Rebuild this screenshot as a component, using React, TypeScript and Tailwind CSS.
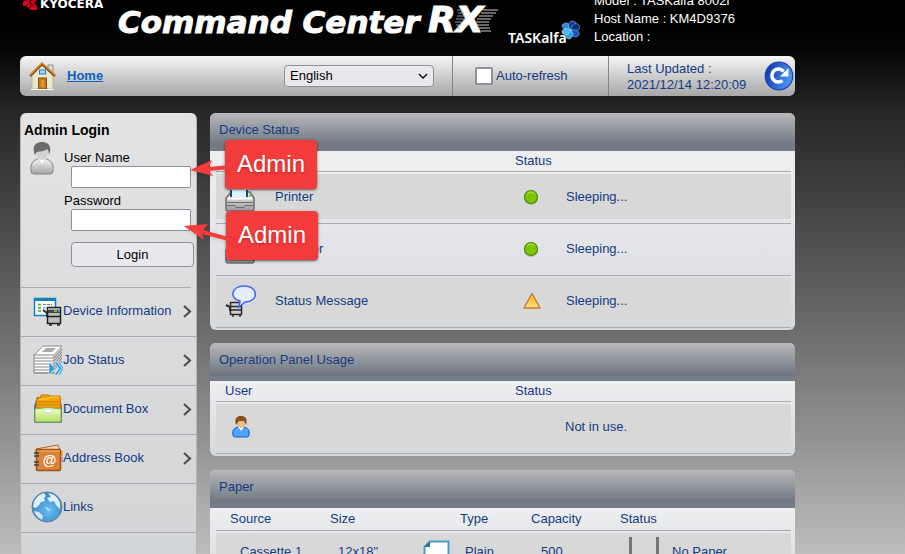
import { useState } from "react";
import type { ReactNode } from "react";

const menuItems = [
  { label: "Device Information", icon: <DeviceIcon />, arrow: true },
  { label: "Job Status", icon: <JobIcon />, arrow: true },
  { label: "Document Box", icon: <BoxIcon />, arrow: true },
  { label: "Address Book", icon: <AddressIcon />, arrow: true },
  { label: "Links", icon: <GlobeIcon />, arrow: false },
];

const deviceRows = [
  { name: "Printer", icon: <PrinterIcon />, status: "Sleeping...", light: <GreenLight /> },
  { name: "Scanner", icon: <PrinterIcon />, status: "Sleeping...", light: <GreenLight /> },
  { name: "Status Message", icon: <MessageIcon />, status: "Sleeping...", light: <Warning /> },
];

function KyoceraMark() {
  return (
    <svg width="14" height="14" viewBox="0 0 14 14" className="shrink-0">
      <path d="M0 0h14v4l-3 3 3 3v4H8l-5-4H0z" fill="#e0001b" />
      <path d="M0 5l4-1 3-4M3 10l4-4 4 5M7 0v5l7-3M9 7l-2 5" stroke="#160305" strokeWidth="1" fill="none" />
    </svg>
  );
}

function Pinwheel() {
  return (
    <svg width="20" height="20" viewBox="0 0 20 20" className="shrink-0">
      <path d="M10 10C5 11 1 8 1 5c4-4 8-2 9 5z" fill="#2b8be0" stroke="#bfe0fa" strokeWidth=".5" />
      <path d="M10 10C6 6 7 2 11 1c5 0 6 4-1 9z" fill="#123f9b" stroke="#bfe0fa" strokeWidth=".5" />
      <path d="M10 10c1-6 5-8 8-5 2 4-1 7-8 5z" fill="#0b2b7c" stroke="#8fc8f5" strokeWidth=".5" />
      <path d="M10 10c6-1 9 1 8 5-3 4-8 2-8-5z" fill="#1b55b8" stroke="#8fc8f5" strokeWidth=".5" />
      <path d="M10 10c3 4 2 8-2 9-5-1-5-6 2-9z" fill="#2f9cec" stroke="#bfe0fa" strokeWidth=".5" />
      <path d="M10 10c-2 5-6 6-9 3-1-4 4-6 9-3z" fill="#55b6f5" stroke="#bfe0fa" strokeWidth=".5" />
    </svg>
  );
}

function HouseIcon() {
  return (
    <svg width="28" height="29" viewBox="0 0 28 29" className="shrink-0">
      <path d="M19 3h5v9l-5-4z" fill="#d9ddd2" stroke="#8b938f" />
      <path d="M3 13L13 3l11 10v14H3z" fill="#e6e8cf" stroke="#b3b8a4" />
      <path d="M1 14L13 2l13 12" fill="none" stroke="#8d4c12" strokeWidth="2.500" />
      <path d="M1 13L13 1l13 12" fill="none" stroke="#d98b2c" strokeWidth="1.200" />
      <rect x="10.500" y="8" width="6" height="4" fill="#a9d8ff" stroke="#1f7bd0" />
      <rect x="9.500" y="16" width="8" height="11" fill="#c47a1a" stroke="#8a4a10" />
      <path d="M12 18h3v7h-3z" fill="#e09a2c" />
      <path d="M2 27.500h23" stroke="#f7f7f0" />
    </svg>
  );
}

function RefreshIcon() {
  return (
    <svg width="30" height="30" viewBox="0 0 30 30">
      <defs>
        <linearGradient id="refresh" x1="0" y1="0" x2="1" y2="0.300">
          <stop offset="0" stopColor="#0a2fa8" />
          <stop offset="1" stopColor="#4b93f0" />
        </linearGradient>
      </defs>
      <circle cx="15" cy="15" r="13.800" fill="url(#refresh)" stroke="#1a47ae" strokeWidth="1.200" />
      <path d="M18.500 19.500a6.500 6.500 0 1 1 1-9" fill="none" stroke="#fff" strokeWidth="3.500" />
      <path d="M24.500 7v8.500h-8.500z" fill="#fff" />
    </svg>
  );
}

function AdminIcon() {
  return (
    <svg width="26" height="34" viewBox="0 0 26 34">
      <defs>
        <linearGradient id="shirt" x1="0" y1="0" x2="0" y2="1">
          <stop offset="0" stopColor="#f2f2f2" />
          <stop offset="1" stopColor="#a4a4a4" />
        </linearGradient>
      </defs>
      <path d="M2 30c-1-8 3-11 7-12h8c5 1 8 5 7 12q0 3-3 3H5q-3 0-3-3z" fill="url(#shirt)" stroke="#858585" />
      <path d="M9 18l4 6 4-6-1-3h-6z" fill="#fff" stroke="#b9b9b9" strokeWidth=".5" />
      <ellipse cx="13" cy="12" rx="6" ry="7" fill="#d2d2d2" />
      <path d="M6 14C2 4 8 1 13 1s11 3 7 13c0-4-1-5-2-6-3 3-8 2-10 3-1 0-1 2-2 3z" fill="#6a6a6a" />
    </svg>
  );
}

function DeviceIcon() {
  return (
    <svg width="30" height="30" viewBox="0 0 30 30">
      <path d="M1.500 2.500h21v17h-21z" fill="#f7fbff" stroke="#1683b8" strokeWidth="1.500" />
      <path d="M1.500 4h21" stroke="#1683b8" strokeWidth="2" />
      <path d="M5 8.500h3M5 12h3M5 15h3" stroke="#4aa52b" strokeWidth="1.500" />
      <path d="M10 8.500h9M10 12h9M10 15h3" stroke="#777" strokeDasharray="3 1" />
      <path d="M10 14l4 3v4" fill="none" stroke="#333" strokeWidth="2" />
      <path d="M14.500 11.500h13v16h-13z" fill="#bdbdbd" stroke="#222" strokeWidth="1.500" />
      <path d="M15 12h12v2H15z" fill="#a5a5a5" />
      <path d="M15 14h12v3H15z" fill="#444" />
      <path d="M21 15h3" stroke="#53d01c" strokeWidth="2" />
      <path d="M25 15h2" stroke="#1591ff" strokeWidth="2" />
      <path d="M15 20.500h12M16 29h3M24 29h3" stroke="#222" strokeWidth="1.500" />
    </svg>
  );
}

function JobIcon() {
  return (
    <svg width="30" height="30" viewBox="0 0 30 30">
      <path d="M1 10L10 1h19l-8 9v18H1z" fill="#fafafa" stroke="#888" />
      <path d="M21 10l8-9v16l-8 10z" fill="#c9c9c9" />
      <path d="M1 10h20M1 13h20M1 16h20M1 19h20M1 22h20M1 25h20M1 28h20" stroke="#8c8c8c" />
      <path d="M21 13l8-9M21 16l8-9M21 19l8-9M21 22l8-9M21 25l8-9" stroke="#777" strokeWidth=".8" />
      <path d="M9 7l4-4h10l-4 4z" fill="#aaa" />
      <path d="M16 17v13l6-6.500zM21 17h3l5 6.500-5 6.500h-3l5-6.500zM25 17h2l4 6.500-4 6.500h-2l4-6.500z" fill="#279ae8" stroke="#fff" strokeWidth=".5" />
    </svg>
  );
}

function BoxIcon() {
  return (
    <svg width="30" height="30" viewBox="0 0 30 30">
      <defs>
        <linearGradient id="box" x1="0" y1="0" x2="0" y2="1">
          <stop offset="0" stopColor="#f1fbd5" />
          <stop offset="1" stopColor="#b2e35f" />
        </linearGradient>
      </defs>
      <path d="M4 3L1 12v16l2 1h24l2-1V12L26 3z" fill="#5d7480" />
      <path d="M3 14L4 4h4V1h7l2 1h10l1 12z" fill="#f5a400" stroke="#c67100" />
      <path d="M4 8h23M4 11h24" stroke="#c97a04" />
      <path d="M6 5h9l2-2h9" stroke="#ffd054" fill="none" />
      <path d="M2 15q13-3 26 0v11q0 2-2 2H4q-2 0-2-2z" fill="url(#box)" stroke="#8bad57" />
      <ellipse cx="15" cy="17" rx="4" ry="2" fill="#fff" stroke="#b9cba0" strokeWidth=".6" />
    </svg>
  );
}

function AddressIcon() {
  return (
    <svg width="30" height="30" viewBox="0 0 30 30">
      <path d="M3 6l22-4 2 5v4H3z" fill="#f6ddc4" stroke="#b55f18" />
      <path d="M27 8h3v5h-3z" fill="#f4b41a" />
      <path d="M27 14h3v5h-3z" fill="#c38fe0" />
      <rect x="3.500" y="6.500" width="24" height="21" rx="1" fill="#dd8238" stroke="#a3530f" strokeWidth="1.500" />
      <path d="M4 8h23" stroke="#f3b076" />
      <path d="M1 10h5M1 13h5M1 19h5M1 22h5" stroke="#3c3c3c" strokeWidth="1.500" />
      <text x="16.500" y="22" textAnchor="middle" fill="#fff" fontFamily="Liberation Sans, sans-serif" fontSize="14" fontWeight="700">@</text>
    </svg>
  );
}

function GlobeIcon() {
  return (
    <svg width="32" height="32" viewBox="0 0 32 32">
      <defs>
        <radialGradient id="globe" cx=".55" cy=".6" r=".55">
          <stop offset="0" stopColor="#6ec0f5" />
          <stop offset="1" stopColor="#3c86c3" />
        </radialGradient>
      </defs>
      <circle cx="16" cy="16" r="15" fill="url(#globe)" stroke="#5d7f9c" />
      <path d="M3 11C5 6 9 3 13 2l2 3-2 2 1 3-4 1-2 3-3 3-3-1zM17 2q9 1 12 10v6l-4-4-2-4-4 1-3-4 4-1z" fill="#eef8ff" opacity=".9" />
      <path d="M3 20l5 1 4 4-1 4q-6-3-8-9z" fill="#dff0fb" opacity=".9" />
      <path d="M15 16l2 3 2-1" stroke="#e8f6ff" fill="none" />
    </svg>
  );
}

function PrinterIcon() {
  return (
    <svg width="30" height="30" viewBox="0 0 30 30">
      <defs>
        <linearGradient id="printer" x1="0" y1="0" x2="0" y2="1">
          <stop offset="0" stopColor="#efefef" />
          <stop offset="1" stopColor="#9b9b9b" />
        </linearGradient>
      </defs>
      <path d="M6 10h19l4 6v11q0 2-2 2H3q-2 0-2-2V16z" fill="url(#printer)" stroke="#707070" strokeWidth="1.500" />
      <path d="M7 2h15v13H5z" fill="#e2f4fb" />
      <path d="M6 8v7M22 8v7" stroke="#174d72" strokeWidth="2" />
      <path d="M3 16.500h24" stroke="#fff" strokeWidth="2" />
      <path d="M2 20.500h26" stroke="#6f6f6f" />
      <path d="M2 23.500h8l1 2h8l1-2h8" stroke="#6f6f6f" fill="none" />
      <path d="M24 13.500h2" stroke="#62c918" strokeWidth="2" />
    </svg>
  );
}

function MessageIcon() {
  return (
    <svg width="32" height="32" viewBox="0 0 32 32">
      <path d="M1 20l4 2v4" fill="none" stroke="#2b2b2b" strokeWidth="2" />
      <path d="M5.500 17.500h11v12h-11z" fill="#d0d0d0" stroke="#2b2b2b" strokeWidth="1.500" />
      <path d="M5 21.500h12M5 25h12M7 31h2M14 31h2" stroke="#2b2b2b" strokeWidth="1.500" />
      <path d="M19 1c15 0 15 16 1 16l-6 5 1-6C4 14 6 1 19 1z" fill="#e3effb" stroke="#3f62ff" strokeWidth="1.500" />
    </svg>
  );
}

function UserIcon() {
  return (
    <svg width="18" height="23" viewBox="0 0 18 23">
      <path d="M1 20c-1-6 2-7 5-8h6c4 1 6 3 5 8q0 2-2 2H3q-2 0-2-2z" fill="#4ea3ff" stroke="#1255d6" />
      <path d="M6 12l3 4 3-4z" fill="#fff" />
      <ellipse cx="9" cy="8" rx="4" ry="5" fill="#e9c184" />
      <path d="M4 10C2 3 5 1 9 1s7 2 5 9l-2-4H7z" fill="#84501c" />
    </svg>
  );
}

function GreenLight() {
  return (
    <svg width="16" height="16" viewBox="0 0 16 16">
      <circle cx="8" cy="9" r="7" fill="#9aa08f" opacity=".5" />
      <circle cx="8" cy="8" r="6.500" fill="#7cc500" stroke="#4d8a0c" strokeWidth="1.200" />
      <path d="M4 5q4-4 8 0" stroke="#b5e35e" fill="none" />
    </svg>
  );
}

function Warning() {
  return (
    <svg width="18" height="18" viewBox="0 0 18 18">
      <defs>
        <linearGradient id="warn" x1="0" y1="0" x2="0" y2="1">
          <stop offset="0.300" stopColor="#ffc21f" />
          <stop offset="1" stopColor="#ffe48c" />
        </linearGradient>
      </defs>
      <path d="M9 1.500L17 16H1z" fill="url(#warn)" stroke="#c9772f" strokeWidth="1.400" strokeLinejoin="round" />
    </svg>
  );
}

function PageIcon() {
  return (
    <svg width="27" height="24" viewBox="0 0 27 24">
      <path d="M7 1.500h18.500V23h-24V7z" fill="#fff" stroke="#4b9bc9" strokeWidth="2" />
      <path d="M7 1v6H1z" fill="#2a6f9d" />
    </svg>
  );
}

function Panel({ title, children }: { title: string; children: ReactNode }) {
  return (
    <section className="overflow-hidden rounded-md bg-linear-to-b from-[#edeff0] from-[38px] via-[#dfe0e5] via-75% to-[#d4d9dc] pb-[2px]">
      <h2 className="h-[38px] border-b-5 border-[#747c88] bg-linear-to-b from-[#b8b8bb] to-[#6e7681] pl-[9px] leading-[33px]">
        {title}
      </h2>
      <div className="mr-1 ml-[6px]">{children}</div>
    </section>
  );
}

function Head({ span, className = "", children }: { span?: number; className?: string; children?: ReactNode }) {
  return (
    <th colSpan={span} className={`border-b border-[#a9abae] p-0 font-normal ${className}`}>
      {children}
    </th>
  );
}

// One body cell: the shaded strip sits inside the cell, clear of the rule below it
function Cell({ shaded = true, className = "", children }: { shaded?: boolean; className?: string; children?: ReactNode }) {
  return (
    <td className="border-b border-[#a9abae] p-0 pt-[2px] pb-1">
      <div className={`flex h-[45px] items-center ${shaded ? "bg-[#d8d8d8]" : ""} ${className}`}>{children}</div>
    </td>
  );
}

function Callout({ className, children }: { className: string; children: ReactNode }) {
  return (
    <div className={`absolute h-[49px] w-[92px] rounded-sm bg-[#f43c3c] text-center text-2xl leading-[47px] text-white shadow-sm shadow-black/50 text-shadow-md ${className}`}>
      {children}
    </div>
  );
}

export default function App() {
  const [language, setLanguage] = useState("English");
  const [autoRefresh, setAutoRefresh] = useState(false);
  const [userName, setUserName] = useState("");
  const [password, setPassword] = useState("");

  return (
    <div className="relative h-screen overflow-hidden bg-linear-to-b from-black from-0% via-[#272727] via-20% to-[#bdbdbd] pr-[110px] pl-5 text-[13px] leading-[18px] text-[#143c82] [font-family:'Liberation_Sans',Arial,sans-serif]">
      <header className="grid h-14 grid-cols-[98px_310px_80px_86px_1fr] text-white">
        <div className="-mt-1 flex items-start gap-[3px] pl-[3px] text-xs leading-4 font-bold [font-family:'DejaVu_Sans',sans-serif]">
          <KyoceraMark />
          <span>KYOCERA</span>
        </div>
        <h1 className="mt-1 text-[31px] leading-9 font-bold whitespace-nowrap italic [-webkit-text-stroke:1px_white] [font-family:'DejaVu_Sans',sans-serif]">
          Command Center
        </h1>
        <div className="relative mt-[2px] text-4xl leading-9 font-bold italic [-webkit-text-stroke:1px_white] [font-family:'DejaVu_Sans',sans-serif]">
          RX
          <svg width="46" height="26" viewBox="0 0 46 26" className="absolute top-[6px] left-[25px]" stroke="#ccc">
            <path d="M30 2h15M28 5h15M26 8h14M24 11h14M22 14h14M24 17h12M26 20h11M28 23h10" />
            <path d="M4 2h5M5 5h6M4 8h8M3 11h9M2 14h8M3 17h5M4 20h3" stroke="#999" />
          </svg>
        </div>
        <div className="flex items-start text-sm leading-5 font-semibold [font-family:'Noto_Sans',sans-serif]">
          <span className="mt-7 w-[53px]">TASKalfa</span>
          <span className="pt-5">
            <Pinwheel />
          </span>
        </div>
        <div className="-mt-2 whitespace-nowrap">
          <p>Model : TASKalfa 8002i</p>
          <p>Host Name : KM4D9376</p>
          <p>Location :</p>
        </div>
      </header>

      <div className="flex h-10 items-stretch rounded-md bg-linear-to-b from-[#f6f6f6] to-[#a7a7a7]">
        <div className="flex w-[433px] items-center border-r border-[#858585] pr-[18px] pl-[9px]">
          <HouseIcon />
          <a href="#home" className="ml-[10px] font-bold text-[#0f62c5] underline">
            Home
          </a>
          <div className="relative ml-auto">
            <select
              aria-label="Language"
              value={language}
              onChange={(e) => setLanguage(e.target.value)}
              className="block h-[22px] w-[150px] appearance-none rounded border border-[#8f8f9d] bg-[#e9e9ed] pl-[5px] text-black"
            >
              <option>English</option>
            </select>
            <svg width="10" height="6" viewBox="0 0 10 6" className="pointer-events-none absolute top-2 right-[6px]">
              <path d="M1 1l4 4 4-4" fill="none" stroke="#111" strokeWidth="1.500" />
            </svg>
          </div>
        </div>
        <label className="flex w-[156px] items-center gap-[3px] border-r border-[#858585] pl-[22px]">
          <input
            type="checkbox"
            checked={autoRefresh}
            onChange={(e) => setAutoRefresh(e.target.checked)}
            className="size-[18px] appearance-none rounded-xs border-2 border-[#8f8f9d] bg-white checked:bg-[#0f62c5]"
          />
          Auto-refresh
        </label>
        <div className="flex flex-1 items-center justify-between pr-px pl-[18px] leading-4">
          <p className="pt-[2px]">
            Last Updated :<br />
            2021/12/14 12:20:09
          </p>
          <button type="button" aria-label="Refresh">
            <RefreshIcon />
          </button>
        </div>
      </div>

      <div className="mt-[17px] grid grid-cols-[177px_1fr] gap-x-[13px]">
        <aside className="h-[600px] rounded-t-md border-x border-[#b4b5b8] bg-linear-to-b from-[#e3e3e3] to-[#cccfd2]">
          <form onSubmit={(e) => e.preventDefault()} className="mr-[5px] h-[175px] border-b border-[#a9abb0] pt-2 text-black">
            <h2 className="pl-[3px] text-sm leading-[18px] font-bold">Admin Login</h2>
            <div className="flex">
              <div className="w-[43px] shrink-0 pt-[2px] pl-2">
                <AdminIcon />
              </div>
              <div className="pt-[11px]">
                <label htmlFor="user" className="block leading-4">
                  User Name
                </label>
                <input
                  id="user"
                  value={userName}
                  onChange={(e) => setUserName(e.target.value)}
                  className="ml-[7px] block h-[22px] w-[120px] rounded-xs border border-[#8f8f9d] bg-white px-1"
                />
                <label htmlFor="password" className="mt-[5px] block leading-4">
                  Password
                </label>
                <input
                  id="password"
                  type="password"
                  value={password}
                  onChange={(e) => setPassword(e.target.value)}
                  className="ml-[7px] block h-[22px] w-[120px] rounded-xs border border-[#8f8f9d] bg-white px-1"
                />
                <button type="submit" className="mt-[11px] ml-[7px] block h-[25px] w-[123px] rounded border border-[#8f8f9d] bg-[#e9e9ed]">
                  Login
                </button>
              </div>
            </div>
          </form>
          <nav>
            {menuItems.map((item) => (
              <a key={item.label} href="#menu" className="flex h-[49px] items-center border-b border-[#a9abb0] pr-1 pb-[2px]">
                <span className="flex w-[42px] justify-end">{item.icon}</span>
                <span className="flex-1 whitespace-nowrap">{item.label}</span>
                {item.arrow && (
                  <svg width="10" height="13" viewBox="0 0 10 13">
                    <path d="M2 1l6 5.500L2 12" fill="none" stroke="#505050" strokeWidth="2.200" />
                  </svg>
                )}
              </a>
            ))}
          </nav>
        </aside>

        <main>
          <Panel title="Device Status">
            <table className="w-full table-fixed border-separate border-spacing-0 text-left">
              <colgroup>
                <col className="w-[59px]" />
                <col className="w-[240px]" />
                <col className="w-[51px]" />
                <col />
              </colgroup>
              <thead>
                <tr className="h-[21px]">
                  <Head span={2} />
                  <Head span={2}>Status</Head>
                </tr>
              </thead>
              <tbody>
                {deviceRows.map((row, i) => (
                  <tr key={row.name}>
                    <Cell shaded={i % 2 === 0} className="pl-[9px]">{row.icon}</Cell>
                    <Cell shaded={i % 2 === 0}>{row.name}</Cell>
                    <Cell shaded={i % 2 === 0} className="pl-2">{row.light}</Cell>
                    <Cell shaded={i % 2 === 0}>{row.status}</Cell>
                  </tr>
                ))}
              </tbody>
            </table>
          </Panel>

          <div className="mt-[13px]">
            <Panel title="Operation Panel Usage">
              <table className="w-full table-fixed border-separate border-spacing-0 text-left">
                <colgroup>
                  <col className="w-[299px]" />
                  <col />
                </colgroup>
                <thead>
                  <tr className="h-[21px]">
                    <Head className="pl-[9px]">User</Head>
                    <Head>Status</Head>
                  </tr>
                </thead>
                <tbody>
                  <tr>
                    <Cell className="pl-4"><UserIcon /></Cell>
                    <Cell className="pl-[50px]">Not in use.</Cell>
                  </tr>
                </tbody>
              </table>
            </Panel>
          </div>

          <div className="mt-[14px]">
            <Panel title="Paper">
              <table className="w-full table-fixed border-separate border-spacing-0 text-left">
                <colgroup>
                  <col className="w-[114px]" />
                  <col className="w-[93px]" />
                  <col className="w-[37px]" />
                  <col className="w-[71px]" />
                  <col className="w-[89px]" />
                  <col />
                </colgroup>
                <thead>
                  <tr className="h-[23px]">
                    <Head className="pl-[14px]">Source</Head>
                    <Head span={2}>Size</Head>
                    <Head>Type</Head>
                    <Head>Capacity</Head>
                    <Head>Status</Head>
                  </tr>
                </thead>
                <tbody>
                  <tr>
                    <Cell className="pb-2 pl-6">Cassette 1</Cell>
                    <Cell className="pb-2 pl-2">12x18"</Cell>
                    <Cell className="pb-2"><PageIcon /></Cell>
                    <Cell className="pb-2 pl-[5px]">Plain</Cell>
                    <Cell className="pb-2 pl-[10px]">500</Cell>
                    <Cell className="gap-[13px] pl-[9px]">
                      <span className="h-[38px] w-[30px] border-x-3 border-[#777]" />
                      <span className="pb-2">No Paper</span>
                    </Cell>
                  </tr>
                </tbody>
              </table>
            </Panel>
          </div>
        </main>
      </div>

      <Callout className="top-[140px] left-[225px]">Admin</Callout>
      <Callout className="top-[211px] left-[226px]">Admin</Callout>
      <svg width="56" height="92" viewBox="0 0 56 92" className="pointer-events-none absolute top-[156px] left-[180px] drop-shadow-sm" fill="#f43c3c">
        <path d="M10 14L32 4l-3 7 21-2v4l-21 2 4 5z" />
        <path d="M4 70l24-2-5 6 29 8v4l-30-8 2 6z" />
      </svg>
    </div>
  );
}
